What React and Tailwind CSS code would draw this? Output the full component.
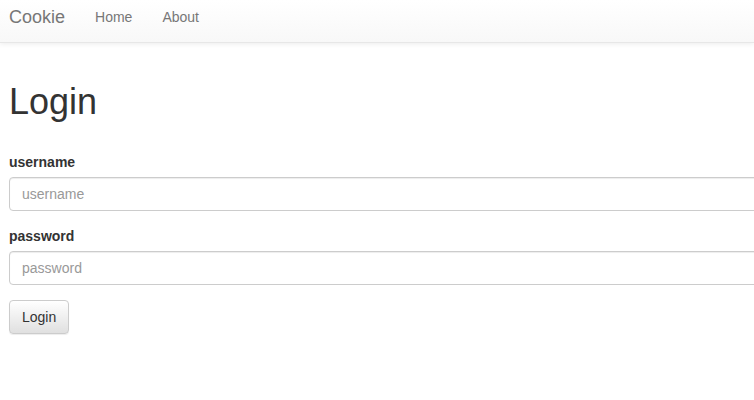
export default function App() {
  return (
    <div className="w-[754px] h-[400px] overflow-hidden bg-white" style={{ fontFamily: '"Liberation Sans", Arial, sans-serif' }}>
      <nav className="h-[43px] bg-gradient-to-b from-white to-[#f8f8f8] border-b border-[#e7e7e7] shadow-[0_1px_5px_rgba(0,0,0,0.08)] flex items-start pt-[7px]">
        <span className="ml-[9px] text-[18px] text-[#777] leading-[20px]">Cookie</span>
        <span className="ml-[30px] text-[14px] text-[#777] leading-[20px]">Home</span>
        <span className="ml-[30px] text-[14px] text-[#777] leading-[20px]">About</span>
      </nav>
      <div className="px-[9px]">
        <h1 className="mt-[39px] text-[36px] leading-[40px] text-[#333]">Login</h1>
        <div className="mt-[30px] w-[800px]">
          <label className="block text-[14px] font-bold text-[#333] leading-[20px]">username</label>
          <input
            className="mt-[5px] block w-full h-[34px] px-[12px] text-[14px] text-[#555] border border-[#ccc] rounded-[4px] shadow-[inset_0_1px_1px_rgba(0,0,0,0.075)] placeholder:text-[#999] outline-none"
            placeholder="username"
          />
          <label className="mt-[15px] block text-[14px] font-bold text-[#333] leading-[20px]">password</label>
          <input
            type="password"
            className="mt-[5px] block w-full h-[34px] px-[12px] text-[14px] text-[#555] border border-[#ccc] rounded-[4px] shadow-[inset_0_1px_1px_rgba(0,0,0,0.075)] placeholder:text-[#999] outline-none"
            placeholder="password"
          />
        </div>
        <button className="mt-[15px] h-[34px] px-[12px] text-[14px] text-[#333] border border-[#ccc] rounded-[4px] bg-gradient-to-b from-white to-[#e0e0e0] shadow-[inset_0_1px_0_rgba(255,255,255,0.15),0_1px_1px_rgba(0,0,0,0.075)]">
          Login
        </button>
      </div>
    </div>
  );
}
